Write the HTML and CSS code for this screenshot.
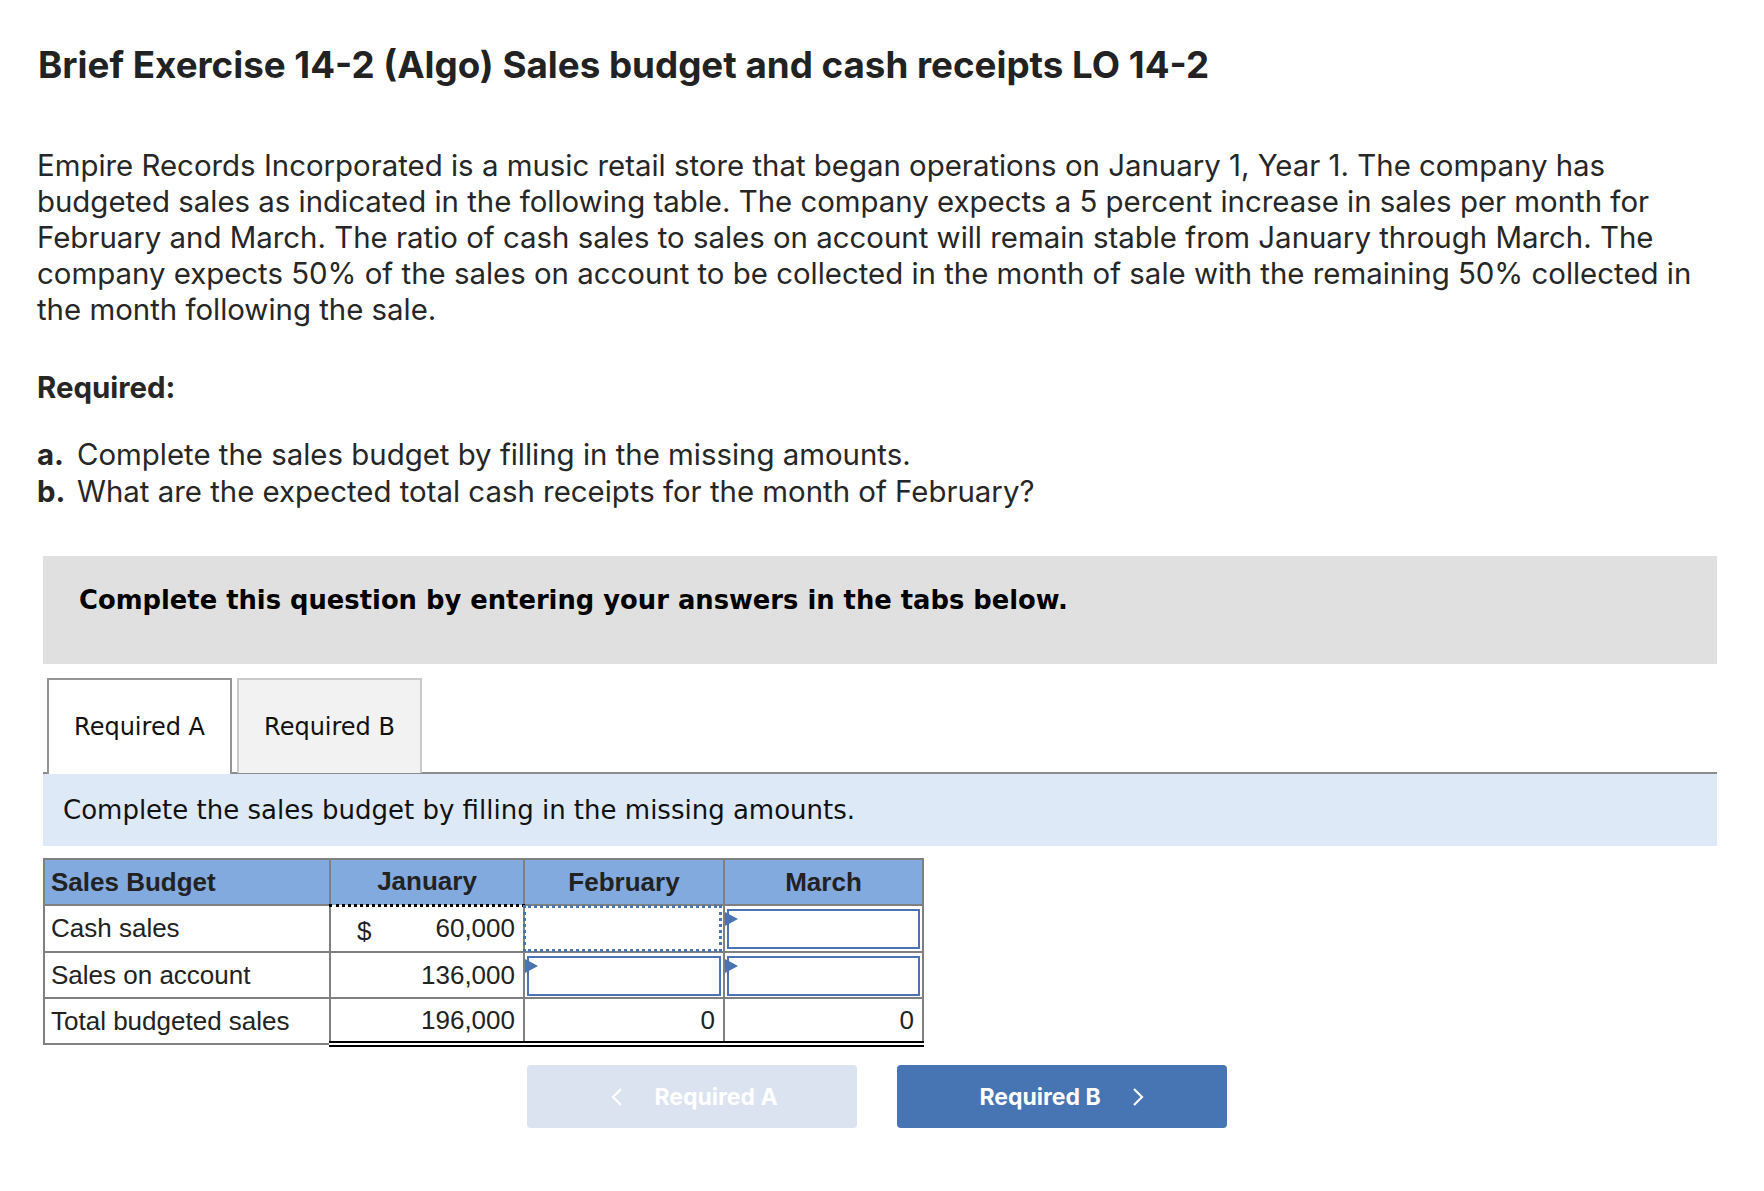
FILE: index.html
```html
<!DOCTYPE html>
<html lang="en">
<head>
<meta charset="utf-8">
<title>Brief Exercise 14-2 (Algo)</title>
<link rel="stylesheet" href="styles.css">
</head>
<body>
<main class="page">
  <h1 class="title">Brief Exercise 14-2 (Algo) Sales budget and cash receipts LO 14-2</h1>
  <p class="intro">Empire Records Incorporated is a music retail store that began operations on January 1, Year 1. The company has<br>budgeted sales as indicated in the following table. The company expects a 5 percent increase in sales per month for<br>February and March. The ratio of cash sales to sales on account will remain stable from January through March. The<br>company expects 50% of the sales on account to be collected in the month of sale with the remaining 50% collected in<br>the month following the sale.</p>
  <h2 class="req">Required:</h2>
  <ol class="parts">
    <li><span class="lbl">a.</span>Complete the sales budget by filling in the missing amounts.</li>
    <li><span class="lbl">b.</span>What are the expected total cash receipts for the month of February?</li>
  </ol>

  <div class="notice">Complete this question by entering your answers in the tabs below.</div>

  <div class="tabs">
    <div class="tab active">Required A</div>
    <div class="tab">Required B</div>
  </div>
  <div class="instr">Complete the sales budget by filling in the missing amounts.</div>

  <table class="budget">
    <colgroup>
      <col class="c1"><col class="c2"><col class="c3"><col class="c4">
    </colgroup>
    <thead>
      <tr>
        <th class="lefth">Sales Budget</th>
        <th>January</th>
        <th>February</th>
        <th>March</th>
      </tr>
    </thead>
    <tbody>
      <tr>
        <td class="label">Cash sales</td>
        <td class="num jan1"><span class="cur">$</span><span>60,000</span></td>
        <td class="inp"><div class="field focus"></div></td>
        <td class="inp"><div class="field"><span class="flag"></span></div></td>
      </tr>
      <tr>
        <td class="label">Sales on account</td>
        <td class="num"><span></span><span>136,000</span></td>
        <td class="inp"><div class="field"><span class="flag"></span></div></td>
        <td class="inp"><div class="field"><span class="flag"></span></div></td>
      </tr>
      <tr class="total">
        <td class="label">Total budgeted sales</td>
        <td class="num"><span></span><span>196,000</span></td>
        <td class="num"><span></span><span>0</span></td>
        <td class="num"><span></span><span>0</span></td>
      </tr>
    </tbody>
  </table>

  <div class="nav">
    <button class="btn prev" type="button">
      <svg class="chev" viewBox="0 0 14 20" width="14" height="20"><polyline points="11,2 3,10 11,18" fill="none" stroke="#fff" stroke-width="2.2"/></svg>
      <span>Required A</span>
    </button>
    <button class="btn next" type="button">
      <span>Required B</span>
      <svg class="chev" viewBox="0 0 14 20" width="14" height="20"><polyline points="3,2 11,10 3,18" fill="none" stroke="#fff" stroke-width="2.2"/></svg>
    </button>
  </div>
</main>
</body>
</html>
```
FILE: styles.css
```css
* { box-sizing: border-box; }
html, body { margin: 0; padding: 0; background: #fff; }
body { font-family: "Inter", "Lato", sans-serif; color: #262626; }

.page { padding: 0 47px 40px 37px; width: 1764px; }

.title {
  margin: 43px 0 0 1px;
  font-size: 36.75px;
  line-height: 44px;
  font-weight: 700;
  color: #222;
}

.intro {
  margin: 61px 0 0 0;
  font-size: 29.4px;
  line-height: 36px;
}

.req {
  margin: 42px 0 0 0;
  font-size: 29.4px;
  line-height: 36px;
  font-weight: 700;
}

.parts {
  list-style: none;
  margin: 30px 0 0 0;
  padding: 0;
  font-size: 29.4px;
  line-height: 37px;
}
.parts li { display: flex; }
.lbl { font-weight: 700; width: 40px; flex: none; }

.notice {
  margin: 46px 0 0 6px;
  height: 108px;
  padding: 29px 0 0 36px;
  background: #e0e0e0;
  font-family: "DejaVu Sans", Verdana, sans-serif;
  font-weight: 700;
  font-size: 25.8px;
  line-height: 30px;
  color: #000;
}

.tabs {
  margin: 14px 0 0 6px;
  display: flex;
  gap: 5px;
  padding-left: 4px;
  border-bottom: 2px solid #8c8c8c;
  height: 96px;
}
.tab {
  width: 185px;
  height: 95px;
  display: flex;
  align-items: center;
  justify-content: center;
  font-family: "DejaVu Sans", Verdana, sans-serif;
  font-size: 24px;
  color: #111;
  background: #f2f2f2;
  border: 2px solid #c9c9c9;
  border-bottom: none;
}
.tab.active {
  background: #fff;
  border-color: #959595;
  height: 96px;
  position: relative;
  z-index: 1;
}

.instr {
  margin: 0 0 0 6px;
  height: 72px;
  padding-left: 20px;
  display: flex;
  align-items: center;
  background: #dde9f7;
  font-family: "DejaVu Sans", Verdana, sans-serif;
  font-size: 26px;
  color: #111;
}

.budget {
  margin: 12px 0 0 6px;
  border-collapse: collapse;
  table-layout: fixed;
  width: 879px;
  font-family: "Liberation Sans", Arial, sans-serif;
  font-size: 26px;
  color: #222;
}
.c1 { width: 286px; }
.c2 { width: 194px; }
.c3 { width: 200px; }
.c4 { width: 199px; }

.budget th, .budget td {
  border: 2px solid #808080;
  height: 46px;
  padding: 0 8px;
}
.budget th {
  background: #82aadf;
  font-weight: 700;
  text-align: center;
  color: #222;
}
.budget th.lefth { text-align: left; padding-left: 6px; }
.budget td.label { padding-left: 6px; }
.budget td.num > * { display: inline-block; }
.budget td.num {
  text-align: right;
  position: relative;
}
.cur { position: absolute; left: 26px; top: 9px; }
.budget td.jan1 { border-top: 3px dotted #000; }

.budget td.inp { padding: 2px 2px 1px 2px; }
.field {
  height: 40px;
  border: 2px solid #4a74b4;
  position: relative;
}
.field.focus {
  border: 3px dotted #4a74b4;
  margin: -3px -1px -2px -4px;
  height: 47px;
}
.flag {
  position: absolute;
  left: -4px;
  top: 1px;
  width: 0;
  height: 0;
  border-left: 13px solid #4a74b4;
  border-top: 7px solid transparent;
  border-bottom: 7px solid transparent;
}

.budget tr.total td.num {
  border-top: 2px solid #000;
  border-bottom: 6px double #000;
}

.nav {
  margin-top: 18px;
  display: flex;
  justify-content: center;
  gap: 40px;
  width: 1680px;
}
.btn {
  width: 330px;
  height: 63px;
  border: none;
  border-radius: 4px;
  display: flex;
  align-items: center;
  justify-content: center;
  gap: 30px;
  font-family: "Inter", "Lato", sans-serif;
  font-weight: 700;
  font-size: 23px;
  color: #fff;
  cursor: pointer;
}
.btn.prev { background: #dae3ef; padding-left: 10px; }
.btn.next { background: #4774b2; padding-right: 6px; }
.chev { display: block; }
```
